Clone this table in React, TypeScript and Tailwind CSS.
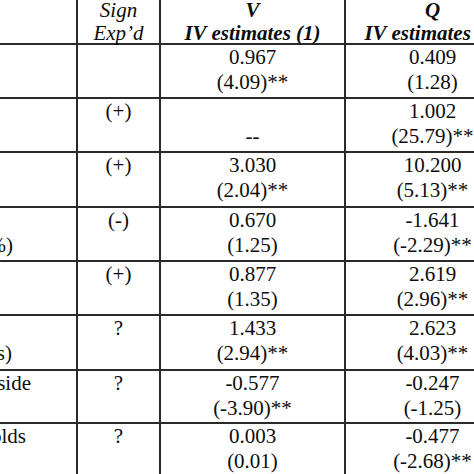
type Line = { text: string; pad: string }

type Row = {
  h: string
  label: [Line, Line]
  sign: string
  v: [string, string]
  q: [string, string]
}

const hidden: Line = { text: '', pad: 'pr-[90px]' }

const rows: Row[] = [
  { h: 'h-[54px]', label: [{ text: 'Log size', pad: 'pr-[90px]' }, hidden], sign: '', v: ['0.967', '(4.09)**'], q: ['0.409', '(1.28)'] },
  { h: 'h-[54px]', label: [{ text: 'Volume', pad: 'pr-[90px]' }, hidden], sign: '(+)', v: ['', '--'], q: ['1.002', '(25.79)**'] },
  { h: 'h-[55px]', label: [{ text: 'Price', pad: 'pr-[90px]' }, hidden], sign: '(+)', v: ['3.030', '(2.04)**'], q: ['10.200', '(5.13)**'] },
  { h: 'h-[54px]', label: [{ text: 'Share change', pad: 'pr-[90px]' }, { text: '(in %)', pad: 'pr-[63px]' }], sign: '(-)', v: ['0.670', '(1.25)'], q: ['-1.641', '(-2.29)**'] },
  { h: 'h-[54px]', label: [{ text: 'Turnover', pad: 'pr-[90px]' }, hidden], sign: '(+)', v: ['0.877', '(1.35)'], q: ['2.619', '(2.96)**'] },
  { h: 'h-[55px]', label: [{ text: 'Firm age', pad: 'pr-[90px]' }, { text: '(in years)', pad: 'pr-[64px]' }], sign: '?', v: ['1.433', '(2.94)**'], q: ['2.623', '(4.03)**'] },
  { h: 'h-[53px]', label: [{ text: 'Outside', pad: 'pr-[45px]' }, hidden], sign: '?', v: ['-0.577', '(-3.90)**'], q: ['-0.247', '(-1.25)'] },
  { h: 'h-[54px]', label: [{ text: 'Households', pad: 'pr-[50px]' }, hidden], sign: '?', v: ['0.003', '(0.01)'], q: ['-0.477', '(-2.68)**'] },
]

const cell = 'border-r-2 border-b-2 border-[#2a2a2a]'

function Lines({ a, b }: { a: string; b: string }) {
  return (
    <div className="flex flex-col items-center leading-[25px]">
      <div className="whitespace-nowrap">{a || '\u00a0'}</div>
      <div className="whitespace-nowrap">{b || '\u00a0'}</div>
    </div>
  )
}

export default function App() {
  return (
    <div className="w-[474px] h-[474px] overflow-hidden bg-white text-[#0d0d0d] font-['Liberation_Serif',serif] text-[21px]">
      <div className="grid grid-cols-[198px_83px_185px_175px] -ml-[120px] -mt-[9px] w-max">
        {/* header */}
        <div className={`${cell} h-[54px]`} />
        <div className={`${cell} h-[54px] pt-[8px] flex flex-col items-center italic leading-[23px]`}>
          <div>Sign</div>
          <div>Exp’d</div>
        </div>
        <div className={`${cell} h-[54px] pt-[8px] flex flex-col items-center italic font-bold leading-[23px]`}>
          <div>V</div>
          <div className="whitespace-nowrap">IV estimates (1)</div>
        </div>
        <div className={`${cell} h-[54px] pt-[8px] flex flex-col items-center italic font-bold leading-[23px]`}>
          <div>Q</div>
          <div className="whitespace-nowrap">IV estimates (2)</div>
        </div>

        {rows.map((r, i) => (
          <div key={i} className="contents">
            <div className={`${cell} ${r.h} flex flex-col items-end leading-[25px]`}>
              {r.label.map((l, j) => (
                <div key={j} className={`whitespace-nowrap ${l.pad}`}>
                  {l.text || '\u00a0'}
                </div>
              ))}
            </div>
            <div className={`${cell} ${r.h} flex justify-center leading-[25px]`}>
              {r.sign}
            </div>
            <div className={`${cell} ${r.h}`}>
              <Lines a={r.v[0]} b={r.v[1]} />
            </div>
            <div className={`${cell} ${r.h}`}>
              <Lines a={r.q[0]} b={r.q[1]} />
            </div>
          </div>
        ))}
      </div>
    </div>
  )
}
